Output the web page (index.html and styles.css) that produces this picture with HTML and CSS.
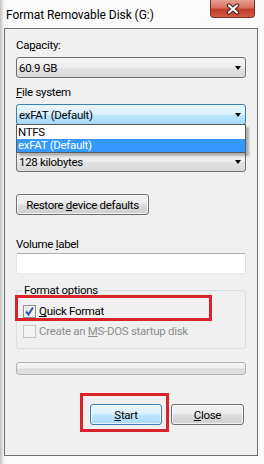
FILE: index.html
```html
<!DOCTYPE html>
<html>
<head>
<meta charset="utf-8">
<link rel="stylesheet" href="styles.css">
</head>
<body>
<div class="window">
  <div class="titlebar">
    <span class="title">Format Removable Disk (G:)</span>
    <div class="close-btn">
      <svg width="20" height="12" viewBox="0 0 20 12"><path d="M6 2.5 L14 9.5 M14 2.5 L6 9.5" stroke="#4a1d18" stroke-width="4.2" stroke-linecap="round"/><path d="M6 2.5 L14 9.5 M14 2.5 L6 9.5" stroke="#ffffff" stroke-width="2.2" stroke-linecap="round"/></svg>
    </div>
  </div>
  <div class="client">
    <div class="label l-cap">Ca<u>p</u>acity:</div>
    <div class="combo"><span>60.9 GB</span><i class="arrow"></i></div>
    <div class="label l-fs"><u>F</u>ile system</div>
    <div class="combo-wrap">
      <div class="combo active"><span>exFAT (Default)</span><i class="arrow"></i></div>
      <ul class="droplist">
        <li>NTFS</li>
        <li class="sel">exFAT (Default)</li>
      </ul>
    </div>
    <div class="label l-alloc"></div>
    <div class="combo"><span>128 kilobytes</span><i class="arrow"></i></div>
    <div class="btn restore"><span>Restore <u>d</u>evice defaults</span></div>
    <div class="label l-vol">Volume <u>l</u>abel</div>
    <div class="textbox"></div>
    <fieldset class="group">
      <legend>Format options</legend>
      <div class="check">
        <span class="box checked"><svg width="11" height="11" viewBox="0 0 11 11"><path d="M2 5.5 L4.5 8.5 L9 1.5" fill="none" stroke="#3d5aa8" stroke-width="2"/></svg></span>
        <span><u>Q</u>uick Format</span>
      </div>
      <div class="check disabled">
        <span class="box"></span>
        <span>Create an <u>M</u>S-DOS startup disk</span>
      </div>
    </fieldset>
    <div class="progress"></div>
    <div class="actions">
      <div class="btn default"><span><u>S</u>tart</span></div>
      <div class="btn"><span><u>C</u>lose</span></div>
    </div>
    <div class="mark mark-quick"></div>
    <div class="mark mark-start"></div>
  </div>
</div>
</body>
</html>
```
FILE: styles.css
```css
* { box-sizing: border-box; }
html, body { margin: 0; padding: 0; }
body {
  font-family: Roboto, "Liberation Sans", sans-serif;
  font-size: 11.5px;
  letter-spacing: -0.3px;
  color: #000;
  background: #fff;
}
u { text-decoration: underline; text-underline-offset: 1px; }

.window {
  width: 264px;
  height: 464px;
  background: linear-gradient(to right, #bdbdbd 0, #dcdcdc 2px, #f4f4f4 4px, #fafafa 10px);
  overflow: hidden;
}

.titlebar {
  height: 28px;
  display: flex;
  justify-content: space-between;
  align-items: flex-start;
}
.title {
  padding: 8px 0 0 6px;
  line-height: 15px;
  font-size: 12px;
  letter-spacing: -0.05px;
}
.close-btn {
  width: 45px;
  height: 18px;
  margin-right: 9px;
  border: 1px solid #7a2f27;
  border-top: none;
  border-radius: 0 0 4px 4px;
  background: linear-gradient(#e5a092 0%, #d7705f 45%, #c43d2c 55%, #cf5a45 100%);
  display: flex;
  align-items: center;
  justify-content: center;
}

.client {
  position: relative;
  margin-left: 4px;
  width: 254px;
  height: 428px;
  border: 1px solid #6b7177;
  background: #f0f0f0;
  padding: 9px 11px 0 11px;
  display: flex;
  flex-direction: column;
}

.label {
  line-height: 15px;
  height: 15px;
  white-space: nowrap;
}
.l-cap { margin-bottom: 4px; }
.l-fs { margin-top: 7px; margin-bottom: 4px; }
.l-alloc { margin-top: 7px; margin-bottom: 4px; }
.l-vol { margin-top: 22px; margin-bottom: 1px; }

.combo {
  height: 21px;
  border: 1px solid #707070;
  border-radius: 3px;
  background: linear-gradient(#f6f6f6 0%, #ececec 50%, #e2e2e2 51%, #d9d9d9 100%);
  display: flex;
  align-items: center;
  justify-content: space-between;
  padding: 0 4px 0 2px;
  white-space: nowrap;
}
.combo.active {
  border-color: #3c7fb1;
  background: linear-gradient(#eaf6fd 0%, #d9f0fc 50%, #bee6fd 51%, #a7d9f5 100%);
}
.arrow {
  width: 0;
  height: 0;
  border-left: 3.5px solid transparent;
  border-right: 3.5px solid transparent;
  border-top: 4px solid #000;
  margin-top: 1px;
}

.combo-wrap { position: relative; }
.droplist {
  position: absolute;
  left: 0;
  top: 20px;
  width: 230px;
  margin: 0;
  padding: 1px 0 0 0;
  list-style: none;
  background: #fff;
  border: 1px solid #5a5a5a;
  box-shadow: 3px 3px 2px rgba(0, 0, 0, 0.28);
  z-index: 5;
}
.droplist li {
  height: 13px;
  line-height: 13px;
  padding-left: 1px;
  font-size: 11.5px;
}
.droplist li.sel {
  background: #3399ff;
  color: #fff;
}

.btn {
  height: 21px;
  border: 1px solid #707070;
  border-radius: 3px;
  background: linear-gradient(#f2f2f2 0%, #ebebeb 48%, #dddddd 52%, #cfcfcf 100%);
  box-shadow: inset 0 0 0 1px rgba(255, 255, 255, 0.7);
  display: flex;
  align-items: center;
  justify-content: center;
  white-space: nowrap;
}
.restore {
  width: 133px;
  margin-top: 22px;
}

.textbox {
  height: 21px;
  border: 1px solid;
  border-color: #abadb3 #dbdfe6 #e3e9ef #e2e3ea;
  border-radius: 2px;
  background: #fff;
}

.group {
  margin: 9px 0 0 0;
  padding: 0 6px 7px 6px;
  border: 1px solid #d5dfe5;
  border-radius: 3px;
  min-width: 0;
}
.group legend {
  padding: 0 2px;
  line-height: 15px;
  margin-left: -1px;
}
.check {
  height: 20px;
  display: flex;
  align-items: center;
  gap: 3px;
  white-space: nowrap;
}
.check:first-of-type { margin-top: 3px; }
.box {
  width: 13px;
  height: 13px;
  border: 1px solid #8e8f8f;
  background: linear-gradient(135deg, #dcdcdc 0%, #f6f6f6 60%, #ffffff 100%);
  box-shadow: inset 0 0 0 1px #f4f4f4;
  display: flex;
  align-items: center;
  justify-content: center;
  flex: none;
}
.disabled { color: #8d8d8d; }
.disabled .box {
  border-color: #c5c5c5;
  background: #f4f4f4;
  box-shadow: none;
}

.progress {
  margin-top: 13px;
  height: 13px;
  border: 1px solid #b2b2b2;
  border-radius: 3px;
  background: linear-gradient(#f5f5f5 0%, #ececec 45%, #dadada 55%, #e2e2e2 100%);
}

.actions {
  margin-top: 29px;
  display: flex;
  justify-content: flex-end;
  gap: 9px;
  padding-right: 2px;
}
.actions .btn { width: 73px; }
.actions .btn.default {
  width: 72px;
  border-color: #3c7fb1;
  background: linear-gradient(#eaf6fd 0%, #d9f0fc 48%, #bee6fd 52%, #a7d9f5 100%);
}

.mark {
  position: absolute;
  border: 3px solid #d8222c;
  z-index: 10;
}
.mark-quick {
  left: 10px;
  top: 266px;
  width: 197px;
  height: 26px;
}
.mark-start {
  left: 75px;
  top: 364px;
  width: 89px;
  height: 39px;
}
```
